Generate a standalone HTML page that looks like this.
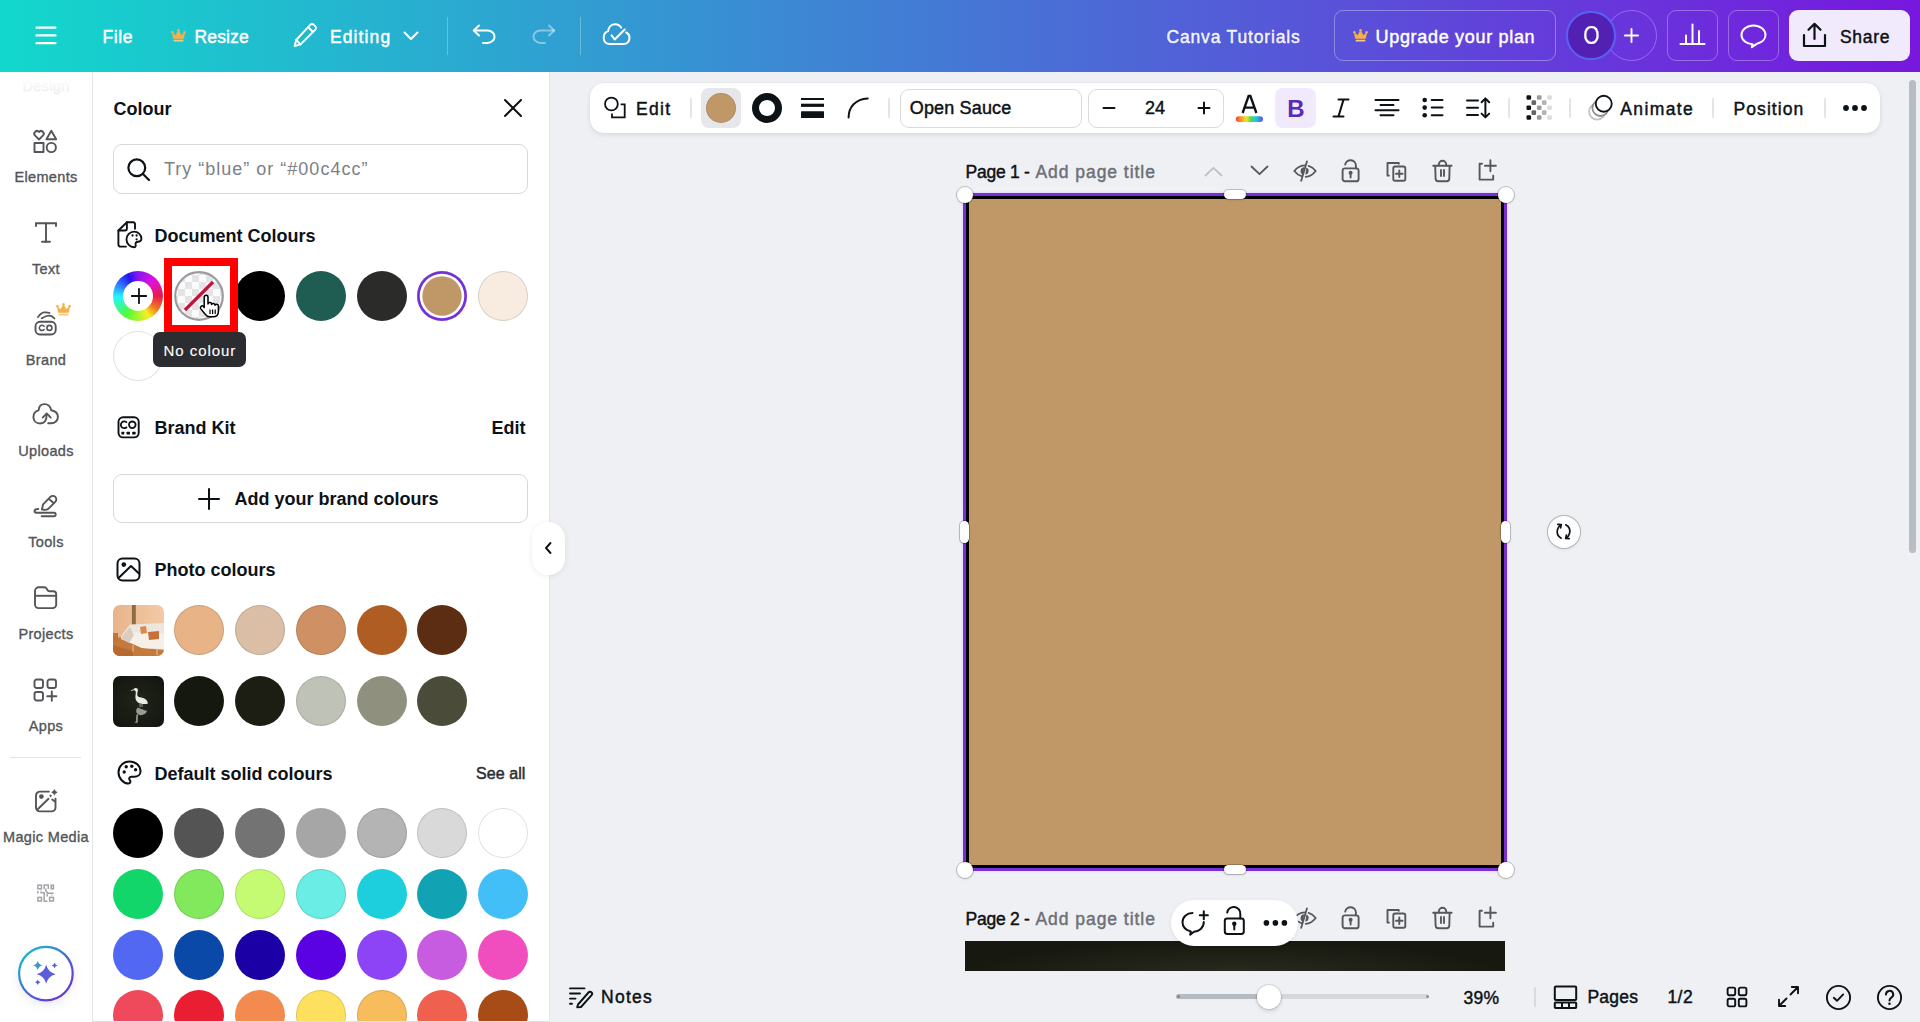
<!DOCTYPE html>
<html><head><meta charset="utf-8">
<style>
*{box-sizing:border-box;margin:0;padding:0}
html,body{width:1920px;height:1022px;overflow:hidden;background:#eff0f4;font-family:"Liberation Sans",sans-serif;color:#0d1216}
.a{position:absolute}
svg{display:block;overflow:visible}
#hdr{left:0;top:0;width:1920px;height:72px;background:linear-gradient(90deg,#12d8cc 0%,#7817de 100%)}
.ht{color:#fff;font-weight:bold;font-size:17.5px;line-height:20px;white-space:nowrap}
#side{left:0;top:72px;width:93px;height:950px;background:#fff;border-right:1px solid #e4e5e9}
.sl{width:92px;text-align:center;color:#535559;font-weight:normal;font-size:14.5px;line-height:16px;white-space:nowrap;letter-spacing:0.35px;-webkit-text-stroke:0.35px #535559}
#panel{left:93px;top:72px;width:456px;height:950px;background:#fff}
.pt{font-weight:bold;font-size:18px;line-height:20px;white-space:nowrap;color:#0d1216}
.sw{width:50px;height:50px;border-radius:50%}
.bd{box-shadow:inset 0 0 0 1px rgba(0,0,0,0.12)}
.tb{color:#0d1216;font-weight:bold;font-size:17.5px;line-height:20px;white-space:nowrap}
.md{font-weight:normal;-webkit-text-stroke-width:0.45px}
</style></head><body>
<div id="hdr" class="a">
<svg class="a" style="left:35px;top:26px" width="22" height="19" viewBox="0 0 22 19"><g stroke="#fff" stroke-width="2.2" stroke-linecap="round"><path d="M1.5 1.6H20.5M1.5 9.4H20.5M1.5 17.2H20.5"/></g></svg>
<div class="a ht md" style="left:102.5px;top:26.5px;letter-spacing:0.6px">File</div>
<svg class="a" style="left:171px;top:29px" width="15" height="13" viewBox="0 0 15 13"><path d="M1.3 3.6 L4.6 6.6 L7.5 1.6 L10.4 6.6 L13.7 3.6 L12.6 9.6 H2.4 Z" fill="#f5b04a" stroke="#f5b04a" stroke-width="0.6" stroke-linejoin="round"/><circle cx="1.4" cy="3.2" r="1.2" fill="#f5b04a"/><circle cx="7.5" cy="1.3" r="1.2" fill="#f5b04a"/><circle cx="13.6" cy="3.2" r="1.2" fill="#f5b04a"/><rect x="2.6" y="10.8" width="9.8" height="1.8" rx="0.5" fill="#f7c88a"/></svg>
<div class="a ht md" style="left:194.5px;top:26.5px;letter-spacing:0.15px">Resize</div>
<svg class="a" style="left:293px;top:23px" width="24" height="24" viewBox="0 0 24 24"><g fill="none" stroke="#fff" stroke-width="1.9" stroke-linejoin="round" stroke-linecap="round"><path d="M17.2 1.8 a2.6 2.6 0 0 1 3.7 0 l1.3 1.3 a2.6 2.6 0 0 1 0 3.7 L7.6 21.4 L1.6 23 L3.2 17 Z"/><path d="M15 4 L20 9"/><path d="M3.2 17 L7.6 21.4"/></g></svg>
<div class="a ht md" style="left:330px;top:26.5px;letter-spacing:1.1px">Editing</div>
<svg class="a" style="left:403px;top:31px" width="16" height="10" viewBox="0 0 16 10"><path d="M1.5 1.5 L8 8 L14.5 1.5" fill="none" stroke="#fff" stroke-width="2" stroke-linecap="round" stroke-linejoin="round"/></svg>
<div class="a" style="left:446.5px;top:17px;width:1px;height:38px;background:rgba(255,255,255,0.28)"></div>
<svg class="a" style="left:472px;top:24px" width="25" height="20" viewBox="0 0 25 20"><g fill="none" stroke="#fff" stroke-width="2" stroke-linecap="round" stroke-linejoin="round"><path d="M7 1.5 L1.8 6.5 L7 11.5"/><path d="M2 6.5 H15.5 a7 6.2 0 0 1 0 12.4 H11"/></g></svg>
<svg class="a" style="left:531px;top:24px" width="25" height="20" viewBox="0 0 25 20" style="opacity:.45"><g fill="none" stroke="rgba(255,255,255,0.42)" stroke-width="2" stroke-linecap="round" stroke-linejoin="round"><path d="M18 1.5 L23.2 6.5 L18 11.5"/><path d="M23 6.5 H9.5 a7 6.2 0 0 0 0 12.4 H14"/></g></svg>
<div class="a" style="left:580px;top:17px;width:1px;height:38px;background:rgba(255,255,255,0.28)"></div>
<svg class="a" style="left:602px;top:23px" width="29" height="23" viewBox="0 0 29 23"><g fill="none" stroke="#fff" stroke-width="2" stroke-linecap="round" stroke-linejoin="round"><path d="M19.2 4.6 C17.9 2.4 15.9 1.2 13.2 1.2 C9.3 1.2 6.5 4 6.1 8.1 C3.6 8.8 1.7 11.5 1.7 14.8 C1.7 18.5 4.3 21.1 7.6 21.1 H21.6 C25 21.1 27.5 18.4 27.5 15 C27.5 12.6 26.4 10.6 24.3 9.5"/><path d="M9.6 12.3 L12.7 16.5 L22.7 6.5"/></g></svg>
<div class="a ht md" style="left:1166.5px;top:26.5px;color:rgba(255,255,255,0.92);letter-spacing:0.83px">Canva Tutorials</div>
<div class="a" style="left:1333.5px;top:10px;width:222px;height:51px;border:1px solid rgba(255,255,255,0.32);border-radius:9px"></div>
<svg class="a" style="left:1353px;top:29px" width="15" height="13" viewBox="0 0 15 13"><path d="M1.3 3.6 L4.6 6.6 L7.5 1.6 L10.4 6.6 L13.7 3.6 L12.6 9.6 H2.4 Z" fill="#f5b04a" stroke="#f5b04a" stroke-width="0.6" stroke-linejoin="round"/><circle cx="1.4" cy="3.2" r="1.2" fill="#f5b04a"/><circle cx="7.5" cy="1.3" r="1.2" fill="#f5b04a"/><circle cx="13.6" cy="3.2" r="1.2" fill="#f5b04a"/><rect x="2.6" y="10.8" width="9.8" height="1.8" rx="0.5" fill="#f7c88a"/></svg>
<div class="a ht md" style="left:1375.5px;top:26.5px;font-size:18px;letter-spacing:0.69px">Upgrade your plan</div>
<div class="a" style="left:1606.3px;top:10.3px;width:50.5px;height:50.5px;border-radius:50%;border:1px solid rgba(190,150,255,0.55)"></div>
<svg class="a" style="left:1624px;top:28px" width="15" height="15" viewBox="0 0 15 15"><path d="M7.5 0.9 V14.1 M0.9 7.5 H14.1" stroke="#fff" stroke-width="1.9" stroke-linecap="round"/></svg>
<div class="a" style="left:1566.3px;top:10.6px;width:49.6px;height:49.6px;border-radius:50%;background:#5220b2;border:2.6px solid #5a5ff2;box-shadow:0 0 2px rgba(90,95,242,0.6)"></div>
<div class="a" style="left:1566.5px;top:22px;width:49px;text-align:center;color:#fff;font-size:25px;line-height:27px;-webkit-text-stroke:0.2px #fff;transform:scaleX(0.84)">O</div>
<div class="a" style="left:1667px;top:10px;width:51px;height:51px;border:1px solid rgba(255,255,255,0.3);border-radius:9px"></div>
<svg class="a" style="left:1679px;top:23px" width="27" height="23" viewBox="0 0 27 23"><g stroke="#fff" stroke-width="2" stroke-linecap="round" fill="none"><path d="M1.5 21 H25.5"/><path d="M7 12.5 V21 M13.5 1.5 V21 M20 8 V21"/></g></svg>
<div class="a" style="left:1728px;top:10px;width:51px;height:51px;border:1px solid rgba(255,255,255,0.3);border-radius:9px"></div>
<svg class="a" style="left:1740px;top:24px" width="27" height="25" viewBox="0 0 27 25"><path d="M13.5 1.5 C6.8 1.5 1.5 5.8 1.5 11 C1.5 16.2 6.8 20.2 12.5 20.2 L11.8 23.2 L16.8 19.8 C21.8 18.6 25.5 15.2 25.5 11 C25.5 5.8 20.2 1.5 13.5 1.5 Z" fill="none" stroke="#fff" stroke-width="2" stroke-linejoin="round"/></svg>
<div class="a" style="left:1789px;top:10px;width:121px;height:51px;background:#f1eafc;border-radius:9px"></div>
<svg class="a" style="left:1802px;top:22px" width="25" height="26" viewBox="0 0 25 26"><g fill="none" stroke="#0d1216" stroke-width="2.2" stroke-linecap="round" stroke-linejoin="round"><path d="M12.5 17 V2 M6.5 7.8 L12.5 1.8 L18.5 7.8"/><path d="M2 13 V24 H23 V13"/></g></svg>
<div class="a ht md" style="left:1840px;top:26.5px;color:#0d1216;letter-spacing:0.69px">Share</div>
</div>
<div id="side" class="a">
<div class="a sl" style="left:0;top:5.8px;color:#ececee;-webkit-text-stroke:0.35px #ececee">Design</div>
<div class="a" style="left:0;top:0;width:92px;height:22px;background:linear-gradient(#fff 30%,rgba(255,255,255,0))"></div>
<svg class="a" style="left:33px;top:57px" width="25" height="25" viewBox="0 0 25 25"><g fill="none" stroke="#535559" stroke-width="1.9" stroke-linejoin="round"><path d="M6 10.5 L1.9 6.4 A2.6 2.6 0 0 1 6 3 A2.6 2.6 0 0 1 10.1 6.4 Z"/><path d="M18.3 1.8 L23.2 10.2 H13.4 Z"/><rect x="1.5" y="14" width="9" height="9"/><circle cx="18.3" cy="18.5" r="4.6"/></g></svg>
<div class="a sl" style="left:0;top:97.15px">Elements</div>
<svg class="a" style="left:35px;top:150px" width="22" height="21" viewBox="0 0 22 21"><g fill="none" stroke="#535559" stroke-width="1.9" stroke-linecap="round"><path d="M1 4 V1.2 H21 V4"/><path d="M11 1.2 V19.8"/><path d="M7 19.8 H15"/></g></svg>
<div class="a sl" style="left:0;top:189.14999999999998px">Text</div>
<svg class="a" style="left:33px;top:238px" width="26" height="27" viewBox="0 0 26 27"><g fill="none" stroke="#535559" stroke-width="1.9" stroke-linecap="round"><rect x="2.5" y="11.8" width="20.2" height="12.7" rx="4.5"/><path d="M4.9 7.1 C7 4.5 8.5 2.6 11 2.4 C13.5 2.2 15.5 2.5 16.6 3.1" stroke-width="1.7"/><path d="M8.6 8.3 C11 7 13.5 5.6 16.1 5.7 C18.5 5.8 20.3 7 21.5 8.5" stroke-width="1.7"/><path d="M11 16.3 A2.6 2.6 0 1 0 11 19.5" stroke-width="1.6"/><circle cx="16.4" cy="17.9" r="2.5" stroke-width="1.6"/></g></svg>
<svg class="a" style="left:56px;top:230.5px" width="15" height="13" viewBox="0 0 15 13"><path d="M1.3 3.6 L4.6 6.6 L7.5 1.6 L10.4 6.6 L13.7 3.6 L12.6 9.6 H2.4 Z" fill="#f5b04a" stroke="#f5b04a" stroke-width="0.6" stroke-linejoin="round"/><circle cx="1.4" cy="3.2" r="1.2" fill="#f5b04a"/><circle cx="7.5" cy="1.3" r="1.2" fill="#f5b04a"/><circle cx="13.6" cy="3.2" r="1.2" fill="#f5b04a"/><rect x="2.6" y="10.8" width="9.8" height="1.8" rx="0.5" fill="#f7c88a"/></svg>
<div class="a sl" style="left:0;top:280.15px">Brand</div>
<svg class="a" style="left:33px;top:331px" width="26" height="23" viewBox="0 0 26 23"><g fill="none" stroke="#535559" stroke-width="1.9" stroke-linecap="round" stroke-linejoin="round"><path d="M15.2 20.3 H18 C22 20.3 24.9 17.5 24.9 14 C24.9 10.5 22.3 7.8 18.2 7.2 C17.4 3.4 15 1.1 11.5 1.1 C8.2 1.1 5.9 3.5 5.6 7.3 C2.4 8.1 0.4 10.8 0.4 14 C0.4 17.8 3.2 20.5 7 20.5 C11 20.5 13.7 17.5 13.7 11.2"/><path d="M9.7 14.6 L13.7 10.4 L17.7 14.6"/></g></svg>
<div class="a sl" style="left:0;top:371.15px">Uploads</div>
<svg class="a" style="left:33px;top:422px" width="26" height="24" viewBox="0 0 26 24"><g fill="none" stroke="#535559" stroke-width="1.9" stroke-linecap="round" stroke-linejoin="round"><path d="M8.9 15.4 L10.1 10.3 L17.4 2.9 A3.4 3.4 0 0 1 22.3 7.8 L15 15.1 C13.2 16.6 11.2 16 8.9 15.4 Z"/><path d="M15.9 5.1 L20.1 8.6"/><path d="M5.3 15 C3.4 15 1.5 15.9 1.5 17.3 C1.5 18.3 2.3 18.7 3.5 18.7 H21 C22.2 18.7 22.7 19.4 22.7 20.4 C22.7 21.5 22 22.2 20.9 22.2 H8.7"/></g></svg>
<div class="a sl" style="left:0;top:462.15px">Tools</div>
<svg class="a" style="left:33px;top:514px" width="25" height="24" viewBox="0 0 25 24"><g fill="none" stroke="#535559" stroke-width="1.9" stroke-linejoin="round"><path d="M2 8 V5 A3.8 3.8 0 0 1 5.8 1.3 H11.2 C12.5 1.3 13.3 1.9 13.9 2.9 L14.5 3.9 C15.1 4.9 15.7 5.3 16.9 5.3 H20.2 A3 3 0 0 1 23.2 8.3 V18.5 A3.6 3.6 0 0 1 19.6 22.1 H5.6 A3.6 3.6 0 0 1 2 18.5 Z"/><path d="M2 9.8 H23.2"/></g></svg>
<div class="a sl" style="left:0;top:554.15px">Projects</div>
<svg class="a" style="left:33px;top:606px" width="25" height="24" viewBox="0 0 25 24"><g fill="none" stroke="#535559" stroke-width="1.9" stroke-linecap="round"><rect x="1.5" y="1.5" width="8.5" height="8.5" rx="2.2"/><rect x="14.5" y="1.5" width="8.5" height="8.5" rx="2.2"/><rect x="1.5" y="14" width="8.5" height="8.5" rx="2.2"/><path d="M18.8 13.5 V22.8 M14.2 18.2 H23.4"/></g></svg>
<div class="a sl" style="left:0;top:645.65px">Apps</div>
<div class="a" style="left:10px;top:685px;width:71px;height:1px;background:#e3e4e8"></div>
<svg class="a" style="left:34px;top:716px" width="26" height="25" viewBox="0 0 26 25"><g fill="none" stroke="#535559" stroke-width="1.9" stroke-linecap="round" stroke-linejoin="round"><path d="M14.9 3.6 H6 A4 4 0 0 0 2 7.6 V19.4 A4 4 0 0 0 6 23.4 H17.5 A4 4 0 0 0 21.5 19.4 V10.6"/><path d="M3.2 21.8 L14.5 10.8"/><path d="M18.3 11.6 L20.8 13.6"/></g><circle cx="7.4" cy="8.6" r="2.3" fill="#535559"/><path d="M20.4 0.9000000000000004 Q21.22 3.38 23.7 4.2 Q21.22 5.03 20.4 7.5 Q19.57 5.03 17.099999999999998 4.2 Q19.57 3.38 20.4 0.9000000000000004 Z" fill="#535559"/><path d="M16.6 6.199999999999999 Q17.08 7.32 18.200000000000003 7.8 Q17.08 8.28 16.6 9.4 Q16.12 8.28 15.000000000000002 7.8 Q16.12 7.32 16.6 6.199999999999999 Z" fill="#535559"/></svg>
<div class="a sl" style="left:0;top:757.15px">Magic Media</div>
<svg class="a" style="left:37px;top:811.5px" width="18" height="18" viewBox="0 0 18 18"><g fill="none" stroke="#a2a4a8" stroke-width="1.5"><rect x="0.9" y="1.2" width="3.6" height="3.6"/><rect x="14.2" y="1.2" width="2.2" height="3.6"/><rect x="0.9" y="13.4" width="3.6" height="3.6"/><rect x="12.6" y="13.4" width="3.8" height="3.6"/><path d="M7.2 5 V0.9 H11.3 V5"/><path d="M0.9 7 V9.5"/><path d="M3.3 8.8 H7.2 V17.2 H10.5"/><path d="M8.8 4.4 V6.8 L11 9.3 H16.6"/><path d="M3.4 7 H4.2"/><path d="M14.8 10.8 V11.5"/><path d="M10.2 9.5 V12.5"/></g></svg>
<svg class="a" style="left:14px;top:870px" width="64" height="64" viewBox="0 0 64 64"><defs><linearGradient id="rg" x1="0.15" y1="0.1" x2="0.85" y2="0.9"><stop offset="0" stop-color="#1ab6c8"/><stop offset="0.55" stop-color="#4a63d6"/><stop offset="1" stop-color="#6a35d8"/></linearGradient></defs><circle cx="31.9" cy="31.6" r="26.8" fill="#fff" stroke="url(#rg)" stroke-width="2.2" style="filter:drop-shadow(0 3px 5px rgba(40,40,80,0.10))"/><path d="M32.2 22.800000000000004 Q34.08 30.32 41.6 32.2 Q34.08 34.08 32.2 41.6 Q30.32 34.08 22.800000000000004 32.2 Q30.32 30.32 32.2 22.800000000000004 Z" fill="#5a5ed8"/><path d="M23.75 18.799999999999997 Q24.58 22.57 28.35 23.4 Q24.58 24.23 23.75 28.0 Q22.92 24.23 19.15 23.4 Q22.92 22.57 23.75 18.799999999999997 Z" fill="#3b96c4"/><path d="M40.6 20.5 Q41.18 22.82 43.5 23.4 Q41.18 23.98 40.6 26.299999999999997 Q40.02 23.98 37.7 23.4 Q40.02 22.82 40.6 20.5 Z" fill="#5a5ed8"/><path d="M23.75 37.5 Q24.31 39.74 26.55 40.3 Q24.31 40.86 23.75 43.099999999999994 Q23.19 40.86 20.95 40.3 Q23.19 39.74 23.75 37.5 Z" fill="#5a5ed8"/></svg>
</div>
<div id="panel" class="a"></div>
<div class="a pt" style="left:113.5px;top:98.56px">Colour</div>
<svg class="a" style="left:504px;top:99px" width="18" height="18" viewBox="0 0 18 18"><path d="M1 1 L17 17 M17 1 L1 17" stroke="#0d1216" stroke-width="2" stroke-linecap="round"/></svg>
<div class="a" style="left:113px;top:144px;width:415px;height:50px;border:1px solid #d6d8dd;border-radius:9px"></div>
<svg class="a" style="left:127px;top:158px" width="24" height="23" viewBox="0 0 24 23"><g fill="none" stroke="#0d1216" stroke-width="2.2" stroke-linecap="round"><circle cx="9.8" cy="9.8" r="8.4"/><path d="M16 16 L22 22"/></g></svg>
<div class="a" style="left:164px;top:158.96px;font-size:18px;line-height:20px;color:#7c8087;white-space:nowrap;letter-spacing:1.0px">Try “blue” or “#00c4cc”</div>
<svg class="a" style="left:117px;top:221px" width="26" height="28" viewBox="0 0 26 28"><g fill="none" stroke="#0d1216" stroke-width="1.9" stroke-linejoin="round" stroke-linecap="round"><path d="M9 25.6 H3.4 A2 2 0 0 1 1.4 23.6 V9.5 L9.9 1.3 H16 A2 2 0 0 1 18 3.3 V7.7"/><path d="M1.4 9.5 H8 A1.9 1.9 0 0 0 9.9 7.6 V1.3"/><path d="M17.3 26.2 C12.8 26 9.5 22.6 9.5 18.4 C9.5 14.1 13 10.6 17 10.6 C21 10.6 24.3 13.6 24.4 17.6 C24.5 20 22.8 20.8 21 20.8 C19.2 20.8 18.3 21.8 18.6 23.3 C18.9 24.6 18.8 26.2 17.3 26.2 Z"/></g><circle cx="15.5" cy="14.5" r="1.15" fill="#0d1216"/><circle cx="19.6" cy="14.5" r="1.15" fill="#0d1216"/><circle cx="19.6" cy="18.3" r="1.15" fill="#0d1216"/></svg>
<div class="a pt" style="left:154.5px;top:226.06px">Document Colours</div>
<div class="a sw" style="left:113px;top:270.5px;background:conic-gradient(#8a14f0 0deg,#de12de 45deg,#e8184a 90deg,#f07a22 125deg,#f6f025 152deg,#55fb35 210deg,#22f6ff 268deg,#2f6cff 305deg,#2414f0 335deg,#8a14f0 360deg)"></div>
<div class="a" style="left:123px;top:280.5px;width:30px;height:30px;border-radius:50%;background:#fff"></div>
<svg class="a" style="left:130.5px;top:288px" width="16" height="16" viewBox="0 0 16 16"><path d="M8 0.8 V15.2 M0.8 8 H15.2" stroke="#0d1216" stroke-width="1.8" stroke-linecap="round"/></svg>
<svg class="a" style="left:174px;top:270.5px" width="50" height="50" viewBox="0 0 50 50"><defs><pattern id="chk" x="4" y="4" width="14" height="14" patternUnits="userSpaceOnUse"><rect width="14" height="14" fill="#fbfbfb"/><rect width="7" height="7" fill="#e3e4e6"/><rect x="7" y="7" width="7" height="7" fill="#e3e4e6"/></pattern><clipPath id="cc"><circle cx="25" cy="25" r="23"/></clipPath></defs><circle cx="25" cy="25" r="23" fill="url(#chk)"/><circle cx="25" cy="25" r="23.8" fill="none" stroke="#9a9b9e" stroke-width="2.2"/><path d="M11 39 L39 11" stroke="#c1123a" stroke-width="3.2" clip-path="url(#cc)"/></svg>
<div class="a sw" style="left:235px;top:270.5px;background:#000;"></div>
<div class="a sw" style="left:295.5px;top:270.5px;background:#1f5c52;"></div>
<div class="a sw" style="left:356.5px;top:270.5px;background:#2b2c2a;"></div>
<div class="a sw" style="left:417px;top:270.5px;background:#c09868;box-shadow:inset 0 0 0 2.7px #7431d9,inset 0 0 0 5.3px #fff"></div>
<div class="a sw bd" style="left:478px;top:270.5px;background:#f7ecdf;"></div>
<div class="a sw bd" style="left:113px;top:331px;background:#fff;"></div>
<div class="a" style="left:163.5px;top:258px;width:74.6px;height:74.6px;border:8.2px solid #ff0000"></div>
<svg class="a" style="left:199px;top:294px" width="22" height="24" viewBox="0 0 22 24"><path d="M5.2 13.5 V3.2 A1.9 1.9 0 0 1 9 3.2 V10 A1.8 1.8 0 0 1 12.6 10.5 A1.8 1.8 0 0 1 16 11.2 A1.8 1.8 0 0 1 19.4 12.2 V17.5 C19.4 20.5 17.5 22.8 14 22.8 H10.5 C8.3 22.8 7.2 21.6 6 20 L1.6 14.6 A1.9 1.9 0 0 1 4.5 12.3 Z" fill="#fff" stroke="#000" stroke-width="1.5" stroke-linejoin="round"/><path d="M11 15.5 V20 M13.6 15.5 V20 M16.2 15.5 V20" stroke="#000" stroke-width="1.2"/></svg>
<div class="a" style="left:152.5px;top:331.5px;width:93px;height:35px;background:#2c2d31;border-radius:7px"></div>
<div class="a" style="left:163.5px;top:341.5px;font-size:15px;line-height:17px;color:#fff;white-space:nowrap;letter-spacing:0.95px;-webkit-text-stroke:0.12px #fff">No colour</div>
<svg class="a" style="left:116px;top:415px" width="25" height="25" viewBox="0 0 25 25"><g fill="none" stroke="#0d1216" stroke-width="1.9"><rect x="2.5" y="2.2" width="20.2" height="20.2" rx="4.6"/><path d="M10.9 7.7 A3.4 3.4 0 1 0 10.9 11.9" stroke-width="1.8"/><circle cx="16.3" cy="9.8" r="3.3" stroke-width="1.8"/></g><g fill="#0d1216"><rect x="5.4" y="16.8" width="2.8" height="2.8" rx="0.4"/><rect x="10.6" y="16.8" width="3.4" height="2.8" rx="0.4"/><rect x="16.2" y="16.8" width="3.4" height="2.8" rx="0.4"/></g></svg>
<div class="a pt" style="left:154.5px;top:417.76px">Brand Kit</div>
<div class="a pt" style="left:491.5px;top:417.76px;width:34px;text-align:right">Edit</div>
<div class="a" style="left:113px;top:474px;width:415px;height:49px;border:1px solid #d6d8dd;border-radius:9px"></div>
<svg class="a" style="left:198px;top:488px" width="22" height="22" viewBox="0 0 22 22"><path d="M11 1 V21 M1 11 H21" stroke="#0d1216" stroke-width="2" stroke-linecap="round"/></svg>
<div class="a pt" style="left:234.5px;top:488.86px">Add your brand colours</div>
<svg class="a" style="left:116px;top:557px" width="25" height="25" viewBox="0 0 25 25"><g fill="none" stroke="#0d1216" stroke-width="2" stroke-linejoin="round"><rect x="1.5" y="1.5" width="22" height="22" rx="5"/><path d="M2 21.5 L15 9 L23.5 17"/></g><circle cx="7.8" cy="7.6" r="2.3" fill="#0d1216"/></svg>
<div class="a pt" style="left:154.5px;top:559.96px">Photo colours</div>
<svg class="a" style="left:113px;top:605px" width="51" height="51" viewBox="0 0 51 51"><defs><clipPath id="th1"><rect width="51" height="51" rx="7"/></clipPath><linearGradient id="wl" x1="0" y1="0" x2="1" y2="0"><stop offset="0" stop-color="#e8b48a"/><stop offset="1" stop-color="#f3caa6"/></linearGradient></defs><g clip-path="url(#th1)"><rect width="51" height="51" fill="url(#wl)"/><rect x="18.9" y="0" width="3.9" height="20" fill="#8f6b45"/><path d="M0 33 L9 32 L30 43 L51 45 V51 H0 Z" fill="#c47a3c"/><path d="M0 40 L20 46 V51 H0 Z" fill="#b86a2e"/><rect x="0" y="28" width="5" height="9" fill="#c0763a"/><path d="M8 31 L17 19.5 L51 18 V44 L29 43 L8 34 Z" fill="#eee5dc"/><path d="M17 27 L51 29 V44 L29 43 L10 34 Z" fill="#f6f0e9"/><path d="M9 31 L17 22 L21 30 L16 38 L9 34 Z" fill="#d9cdc1"/><path d="M27 22 L33 21 L34 28 L28 29 Z" fill="#d98b4b"/><path d="M35 27 L46 26 L46 34 L36 35 Z" fill="#c8703a"/><path d="M20 40 V47 M44 44 V50" stroke="#e6d8c8" stroke-width="0.8"/></g></svg>
<svg class="a" style="left:113px;top:676px" width="51" height="51" viewBox="0 0 51 51"><defs><clipPath id="th2"><rect width="51" height="51" rx="7"/></clipPath><radialGradient id="dk" cx="0.5" cy="0.5" r="0.65"><stop offset="0" stop-color="#22251a"/><stop offset="1" stop-color="#131510"/></radialGradient></defs><g clip-path="url(#th2)"><rect width="51" height="51" fill="url(#dk)"/><path d="M20.5 14.2 C20.2 12 23.2 11.2 24.6 12.8 C25.6 14.2 24.2 16.4 24.2 18.4 C24.2 20.4 26 21.2 28.5 21.6 C32 22.2 34.5 24.5 35 27.5 C31.5 28.5 27.5 28 25 26.5 C22.6 25 22 22 22.6 18.8 C22.9 16.8 23 15.2 22 14.6 Z" fill="#e9ebe2"/><path d="M20.6 13.8 L18.2 14.6" stroke="#d6d8cf" stroke-width="1"/><path d="M27 27.5 V31 M29 27.8 V31" stroke="#b9bbb2" stroke-width="0.8"/><path d="M25 31.5 C22.5 33.5 22.6 37 25.5 38.6 C29 40.2 33 38 34.2 35 C30.8 33.8 27.5 33 25 31.5 Z" fill="#aeb0a6" opacity="0.85"/><path d="M24.6 38.5 C23 41 24.5 43.5 23.8 46.5" stroke="#a2a49a" stroke-width="1.6" fill="none"/><path d="M23.8 46.5 L21.8 46" stroke="#9a9c92" stroke-width="1"/></g></svg>
<div class="a sw bd" style="left:174px;top:605px;background:#e7b387"></div>
<div class="a sw bd" style="left:235px;top:605px;background:#dbbea6"></div>
<div class="a sw bd" style="left:295.5px;top:605px;background:#cf9163"></div>
<div class="a sw" style="left:356.5px;top:605px;background:#af5d23"></div>
<div class="a sw" style="left:417px;top:605px;background:#5c2d12"></div>
<div class="a sw" style="left:174px;top:676px;background:#15180e"></div>
<div class="a sw" style="left:235px;top:676px;background:#1c1e13"></div>
<div class="a sw bd" style="left:295.5px;top:676px;background:#bfc3b7"></div>
<div class="a sw" style="left:356.5px;top:676px;background:#8f907e"></div>
<div class="a sw" style="left:417px;top:676px;background:#4a4b38"></div>
<svg class="a" style="left:117px;top:760px" width="25" height="25" viewBox="0 0 25 25"><path d="M12.5 1.5 C6.4 1.5 1.5 6.2 1.5 12.2 C1.5 18.5 6.5 23.5 11.5 23.5 C13.6 23.5 13.8 21.5 12.8 20.2 C11.6 18.8 12.4 16.8 14.3 16.8 H17.2 C20.8 16.8 23.5 14.6 23.5 11.4 C23.5 5.8 18.6 1.5 12.5 1.5 Z" fill="none" stroke="#0d1216" stroke-width="2" stroke-linejoin="round"/><circle cx="7.2" cy="12" r="1.7" fill="#0d1216"/><circle cx="9.2" cy="6.8" r="1.7" fill="#0d1216"/><circle cx="14.8" cy="6.2" r="1.7" fill="#0d1216"/><circle cx="18.6" cy="9.8" r="1.7" fill="#0d1216"/></svg>
<div class="a pt" style="left:154.5px;top:763.76px">Default solid colours</div>
<div class="a" style="left:460px;top:765.45px;width:65.5px;text-align:right;font-weight:normal;-webkit-text-stroke:0.5px #2b2f35;letter-spacing:0.1px;font-size:16px;line-height:18px;color:#2b2f35;white-space:nowrap">See all</div>
<div class="a sw" style="left:113px;top:808px;background:#000000"></div>
<div class="a sw" style="left:174px;top:808px;background:#545454"></div>
<div class="a sw" style="left:235px;top:808px;background:#737373"></div>
<div class="a sw" style="left:295.5px;top:808px;background:#a6a6a6"></div>
<div class="a sw bd" style="left:356.5px;top:808px;background:#b4b4b4"></div>
<div class="a sw bd" style="left:417px;top:808px;background:#d9d9d9"></div>
<div class="a sw bd" style="left:478px;top:808px;background:#ffffff"></div>
<div class="a sw" style="left:113px;top:869px;background:#12d66a"></div>
<div class="a sw bd" style="left:174px;top:869px;background:#82e85c"></div>
<div class="a sw bd" style="left:235px;top:869px;background:#c5fb72"></div>
<div class="a sw bd" style="left:295.5px;top:869px;background:#6aede5"></div>
<div class="a sw" style="left:356.5px;top:869px;background:#1dcfdc"></div>
<div class="a sw" style="left:417px;top:869px;background:#11a3b3"></div>
<div class="a sw" style="left:478px;top:869px;background:#43bff8"></div>
<div class="a sw" style="left:113px;top:929.6px;background:#5268f2"></div>
<div class="a sw" style="left:174px;top:929.6px;background:#0b49a8"></div>
<div class="a sw" style="left:235px;top:929.6px;background:#1b00a6"></div>
<div class="a sw" style="left:295.5px;top:929.6px;background:#5b02e3"></div>
<div class="a sw" style="left:356.5px;top:929.6px;background:#8d43f6"></div>
<div class="a sw" style="left:417px;top:929.6px;background:#c75ce1"></div>
<div class="a sw" style="left:478px;top:929.6px;background:#f04dbf"></div>
<div class="a sw" style="left:113px;top:990.3px;background:#ee4a5b"></div>
<div class="a sw" style="left:174px;top:990.3px;background:#e91e32"></div>
<div class="a sw" style="left:235px;top:990.3px;background:#f38a4f"></div>
<div class="a sw bd" style="left:295.5px;top:990.3px;background:#fde15e"></div>
<div class="a sw bd" style="left:356.5px;top:990.3px;background:#f7bc5b"></div>
<div class="a sw" style="left:417px;top:990.3px;background:#f0604f"></div>
<div class="a sw" style="left:478px;top:990.3px;background:#a74b17"></div>
<div class="a" style="left:92px;top:1021px;width:457px;height:1px;background:#dfe0e4"></div>
<div class="a" style="left:590px;top:83px;width:1290px;height:50px;background:#fff;border-radius:14px;box-shadow:0 2px 5px rgba(30,40,60,0.10),0 0 1px rgba(30,40,60,0.12)"></div>
<svg class="a" style="left:603px;top:95px" width="24" height="24" viewBox="0 0 24 24"><g fill="none" stroke="#0d1216" stroke-width="1.8"><circle cx="8.4" cy="9" r="6.4"/><path d="M9 19.3 V22.3 H21.7 V9.4 H18.6" stroke-linecap="square"/></g></svg>
<div class="a tb md" style="left:636px;top:98.94px;letter-spacing:1.28px">Edit</div>
<div class="a" style="left:690px;top:98px;width:2px;height:20px;background:#e3e4e7;border-radius:1px"></div>
<div class="a" style="left:888.3px;top:98px;width:2px;height:20px;background:#e3e4e7;border-radius:1px"></div>
<div class="a" style="left:1507.8px;top:98px;width:2px;height:20px;background:#e3e4e7;border-radius:1px"></div>
<div class="a" style="left:1569px;top:98px;width:2px;height:20px;background:#e3e4e7;border-radius:1px"></div>
<div class="a" style="left:1712.3px;top:98px;width:2px;height:20px;background:#e3e4e7;border-radius:1px"></div>
<div class="a" style="left:1823.7px;top:98px;width:2px;height:20px;background:#e3e4e7;border-radius:1px"></div>
<div class="a" style="left:701px;top:88px;width:40px;height:40px;background:#e6e7eb;border-radius:8px"></div>
<div class="a" style="left:706.3px;top:93px;width:30px;height:30px;border-radius:50%;background:#c09868;box-shadow:inset 0 0 0 1px rgba(0,0,0,0.08)"></div>
<div class="a" style="left:752px;top:93px;width:30px;height:30px;border-radius:50%;border:7.6px solid #0d1216"></div>
<svg class="a" style="left:800px;top:96px" width="25" height="24" viewBox="0 0 25 24"><g fill="#0d1216"><rect x="1" y="2" width="23" height="2"/><rect x="1" y="7.7" width="23" height="3.2"/><rect x="1" y="15.3" width="23" height="6.7" rx="0.5"/></g></svg>
<svg class="a" style="left:846px;top:96px" width="24" height="24" viewBox="0 0 24 24"><path d="M2.6 21.5 C2.6 11 9.5 3 21.8 2.4" fill="none" stroke="#0d1216" stroke-width="2" stroke-linecap="round"/></svg>
<div class="a" style="left:899.5px;top:88.5px;width:182px;height:39px;border:1px solid #d9dbdf;border-radius:9px"></div>
<div class="a" style="left:909.8px;top:98.36px;font-size:18px;line-height:20px;white-space:nowrap;color:#0d1216;letter-spacing:0.15px;-webkit-text-stroke:0.45px #0d1216">Open Sauce</div>
<div class="a" style="left:1087.5px;top:88.5px;width:136px;height:39px;border:1px solid #d9dbdf;border-radius:9px"></div>
<svg class="a" style="left:1101.5px;top:101px" width="14" height="14" viewBox="0 0 14 14"><path d="M1.5 7 H12.5" stroke="#0d1216" stroke-width="2" stroke-linecap="round"/></svg>
<div class="a" style="left:1135px;top:98.36px;width:40px;text-align:center;font-size:18px;line-height:20px;color:#0d1216;-webkit-text-stroke:0.45px #0d1216">24</div>
<svg class="a" style="left:1196.5px;top:101px" width="14" height="14" viewBox="0 0 14 14"><path d="M7 1.5 V12.5 M1.5 7 H12.5" stroke="#0d1216" stroke-width="2" stroke-linecap="round"/></svg>
<svg class="a" style="left:1234px;top:94px" width="31" height="30" viewBox="0 0 31 30"><defs><linearGradient id="rb" x1="0" x2="1"><stop offset="0" stop-color="#ff3b3b"/><stop offset="0.2" stop-color="#ff9a1f"/><stop offset="0.4" stop-color="#e8e82a"/><stop offset="0.55" stop-color="#4fdc4a"/><stop offset="0.75" stop-color="#22c6e6"/><stop offset="1" stop-color="#5a4df0"/></linearGradient></defs><path d="M8.6 19 L14.6 2 H16.4 L22.4 19 M10.6 13.6 H20.4" fill="none" stroke="#0d1216" stroke-width="2.3" stroke-linejoin="miter"/><rect x="1.8" y="22.2" width="27.2" height="5.8" rx="2.9" fill="url(#rb)"/></svg>
<div class="a" style="left:1275px;top:88px;width:40.5px;height:40px;background:#f1eafd;border-radius:8px"></div>
<div class="a" style="left:1286px;top:95.5px;width:20px;text-align:center;font-weight:bold;font-size:24px;line-height:26px;color:#5a2cb5">B</div>
<svg class="a" style="left:1331px;top:98px" width="20" height="20" viewBox="0 0 20 20"><g stroke="#0d1216" stroke-width="2" stroke-linecap="round" fill="none"><path d="M7.5 1.6 H17.5 M2.5 18.4 H12.5 M12.5 1.6 L7.5 18.4"/></g></svg>
<svg class="a" style="left:1374px;top:98px" width="26" height="20" viewBox="0 0 26 20"><g stroke="#0d1216" stroke-width="2" stroke-linecap="round"><path d="M1.5 2 H24.5 M6.5 7 H19.5 M1.5 12.3 H24.5 M6.5 17.3 H19.5"/></g></svg>
<svg class="a" style="left:1421px;top:97px" width="24" height="22" viewBox="0 0 24 22"><g fill="#0d1216"><circle cx="3.7" cy="3" r="2.3"/><circle cx="3.7" cy="10.6" r="2.3"/><circle cx="3.7" cy="18.3" r="2.3"/></g><g stroke="#0d1216" stroke-width="2" stroke-linecap="round"><path d="M10.7 3 H21.5 M10.7 10.6 H21.5 M10.7 18.3 H21.5"/></g></svg>
<svg class="a" style="left:1465px;top:97px" width="27" height="22" viewBox="0 0 27 22"><g stroke="#0d1216" stroke-width="2" stroke-linecap="round" stroke-linejoin="round" fill="none"><path d="M2 3.4 H13 M2 10.7 H13 M2 18 H13"/><path d="M20.4 1.6 V20.2 M16.6 5.2 L20.4 1.4 L24.2 5.2 M16.6 16.6 L20.4 20.4 L24.2 16.6"/></g></svg>
<svg class="a" style="left:1524px;top:93px" width="30" height="30" viewBox="0 0 30 30"><rect x="2.50" y="2.20" width="4.6" height="4.6" rx="1.2" fill="#111"/><rect x="2.50" y="12.40" width="4.6" height="4.6" rx="1.2" fill="#111"/><rect x="2.50" y="22.20" width="4.6" height="4.6" rx="1.2" fill="#111"/><rect x="7.50" y="7.30" width="4.6" height="4.6" rx="1.2" fill="#666"/><rect x="7.50" y="17.30" width="4.6" height="4.6" rx="1.2" fill="#666"/><rect x="12.90" y="2.20" width="4.6" height="4.6" rx="1.2" fill="#9a9a9a"/><rect x="12.90" y="12.40" width="4.6" height="4.6" rx="1.2" fill="#9a9a9a"/><rect x="12.90" y="22.20" width="4.6" height="4.6" rx="1.2" fill="#9a9a9a"/><rect x="17.90" y="7.30" width="4.6" height="4.6" rx="1.2" fill="#b4b4b4"/><rect x="17.90" y="17.30" width="4.6" height="4.6" rx="1.2" fill="#b4b4b4"/><rect x="23.30" y="2.20" width="4.6" height="4.6" rx="1.2" fill="#dcdcdc"/><rect x="23.30" y="12.40" width="4.6" height="4.6" rx="1.2" fill="#dcdcdc"/><rect x="23.30" y="22.20" width="4.6" height="4.6" rx="1.2" fill="#dcdcdc"/></svg>
<svg class="a" style="left:1585px;top:93px" width="30" height="30" viewBox="0 0 30 30"><g fill="none" stroke-width="1.8"><circle cx="12.1" cy="18.6" r="8" stroke="#c4c4c4"/><circle cx="15.4" cy="15" r="8" stroke="#8d8d8d" fill="#fff"/><circle cx="18.75" cy="10.75" r="8" stroke="#0d1216" fill="#fff"/></g></svg>
<div class="a tb md" style="left:1620.3px;top:98.94px;letter-spacing:1.37px">Animate</div>
<div class="a tb md" style="left:1733.5px;top:98.94px;letter-spacing:1.08px">Position</div>
<svg class="a" style="left:1842px;top:104px" width="26" height="8" viewBox="0 0 26 8"><g fill="#0d1216"><circle cx="4" cy="4" r="2.9"/><circle cx="13" cy="4" r="2.9"/><circle cx="22" cy="4" r="2.9"/></g></svg>
<div class="a tb md" style="left:965.5px;top:161.94px;letter-spacing:-0.25px">Page 1 -</div><div class="a tb md" style="left:1035.5px;top:161.94px;color:#6c7077;letter-spacing:0.95px">Add page title</div>
<svg class="a" style="left:1204px;top:166px" width="19" height="11" viewBox="0 0 19 11"><path d="M1.5 9.5 L9.5 1.8 L17.5 9.5" fill="none" stroke="#bfc1c5" stroke-width="1.8" stroke-linecap="round" stroke-linejoin="round"/></svg>
<svg class="a" style="left:1250px;top:165px" width="19" height="11" viewBox="0 0 19 11"><path d="M1.5 1.5 L9.5 9.2 L17.5 1.5" fill="none" stroke="#54575c" stroke-width="1.8" stroke-linecap="round" stroke-linejoin="round"/></svg>
<svg class="a" style="left:1293px;top:160px" width="24" height="22" viewBox="0 0 24 22"><g fill="none" stroke="#54575c" stroke-width="1.8" stroke-linecap="round"><path d="M8.6 16.2 C5.5 15.3 3 13.2 1.3 11 C4 7.5 7.6 5.5 11.3 5.3"/><path d="M15.6 5.8 C18.5 6.7 21 8.6 22.7 11 C20 14.5 16.4 16.6 12.7 16.8"/><path d="M14 1.3 L8.2 20.8"/></g><path d="M11.3 7.3 A3.8 3.8 0 0 0 9.9 14.6 Z" fill="#54575c"/><path d="M13.4 7.6 A3.7 3.7 0 0 1 12.3 14.7 Z" fill="#54575c"/></svg>
<svg class="a" style="left:1341px;top:158px" width="19" height="25" viewBox="0 0 19 25"><g fill="none" stroke="#54575c" stroke-width="1.9" stroke-linecap="round"><path d="M4.2 6.6 A5.4 5.4 0 0 1 14.9 7.5 V10.4"/><rect x="1.6" y="10.4" width="16" height="12.9" rx="2.4"/><path d="M9.6 15.2 V19.6"/></g><circle cx="9.6" cy="14.8" r="2" fill="#54575c"/></svg>
<svg class="a" style="left:1386px;top:161px" width="21" height="21" viewBox="0 0 21 21"><g fill="none" stroke="#54575c" stroke-width="1.9" stroke-linecap="round" stroke-linejoin="round"><path d="M12.8 2.8 V2 H1.5 V14.6 H3"/><rect x="7.3" y="5.5" width="12" height="14.3" rx="1.8"/><path d="M13.3 9.4 V16 M10 12.7 H16.6"/></g></svg>
<svg class="a" style="left:1431.5px;top:160px" width="21" height="23" viewBox="0 0 21 23"><g fill="none" stroke="#54575c" stroke-width="1.9" stroke-linecap="round" stroke-linejoin="round"><path d="M1.2 5.8 H19.6"/><path d="M6.8 5.6 V4.5 A2.8 2.8 0 0 1 14.2 4.5 V5.6"/><path d="M3.2 6 L3.6 18.5 A2.7 2.7 0 0 0 6.3 21.2 H14.6 A2.7 2.7 0 0 0 17.3 18.5 L17.6 6"/><path d="M9 10 V16 M12 10 V16"/></g></svg>
<svg class="a" style="left:1478px;top:159px" width="21" height="22" viewBox="0 0 21 22"><g fill="none" stroke="#54575c" stroke-width="1.9" stroke-linecap="round" stroke-linejoin="round"><path d="M4 4.7 H1.6 V20.6 H15.2 V16.6"/><path d="M12.4 1.3 V12.3 M6.9 6.8 H17.9"/></g></svg>
<div class="a" style="left:963px;top:193px;width:544px;height:678px;border:3px solid #7631d3;box-shadow:0 0 0 1.5px rgba(236,222,255,0.9)"></div>
<div class="a" style="left:966px;top:196px;width:538px;height:672px;border:3px solid #000;background:#c09868"></div>
<div class="a" style="left:956.5px;top:186.5px;width:16px;height:16px;border-radius:50%;background:#fff;box-shadow:0 0 0 1px rgba(0,0,0,0.2),0 1px 3px rgba(0,0,0,0.12)"></div>
<div class="a" style="left:1497.5px;top:186.5px;width:16px;height:16px;border-radius:50%;background:#fff;box-shadow:0 0 0 1px rgba(0,0,0,0.2),0 1px 3px rgba(0,0,0,0.12)"></div>
<div class="a" style="left:956.5px;top:861.5px;width:16px;height:16px;border-radius:50%;background:#fff;box-shadow:0 0 0 1px rgba(0,0,0,0.2),0 1px 3px rgba(0,0,0,0.12)"></div>
<div class="a" style="left:1497.5px;top:861.5px;width:16px;height:16px;border-radius:50%;background:#fff;box-shadow:0 0 0 1px rgba(0,0,0,0.2),0 1px 3px rgba(0,0,0,0.12)"></div>
<div class="a" style="left:1224px;top:190px;width:22px;height:9px;border-radius:5px;background:#fff;box-shadow:0 0 0 1px rgba(0,0,0,0.2),0 1px 3px rgba(0,0,0,0.12)"></div>
<div class="a" style="left:1224px;top:865px;width:22px;height:9px;border-radius:5px;background:#fff;box-shadow:0 0 0 1px rgba(0,0,0,0.2),0 1px 3px rgba(0,0,0,0.12)"></div>
<div class="a" style="left:960px;top:521px;width:9px;height:22px;border-radius:5px;background:#fff;box-shadow:0 0 0 1px rgba(0,0,0,0.2),0 1px 3px rgba(0,0,0,0.12)"></div>
<div class="a" style="left:1501px;top:521px;width:9px;height:22px;border-radius:5px;background:#fff;box-shadow:0 0 0 1px rgba(0,0,0,0.2),0 1px 3px rgba(0,0,0,0.12)"></div>
<div class="a" style="left:1547.5px;top:515.5px;width:32px;height:32px;border-radius:50%;background:#fff;box-shadow:0 0 0 1px rgba(0,0,0,0.22),0 1px 4px rgba(0,0,0,0.1)"></div>
<svg class="a" style="left:1554px;top:522px" width="19" height="19" viewBox="0 0 19 19"><g fill="none" stroke="#0d1216" stroke-width="1.7" stroke-linecap="round" stroke-linejoin="round"><path d="M7.2 16.2 C4 14.5 2.6 11 3.5 7.5 C4 5.5 5.6 3.6 7 2.8"/><path d="M3.8 2.3 L7.3 2.5 L6.6 5.8"/><path d="M11.8 2.8 C15 4.5 16.4 8 15.5 11.5 C15 13.5 13.4 15.4 12 16.2"/><path d="M15.2 16.7 L11.7 16.5 L12.4 13.2"/></g></svg>
<div class="a tb md" style="left:965.5px;top:908.94px;letter-spacing:-0.25px">Page 2 -</div><div class="a tb md" style="left:1035.5px;top:908.94px;color:#6c7077;letter-spacing:0.95px">Add page title</div>
<svg class="a" style="left:1204px;top:913px" width="19" height="11" viewBox="0 0 19 11"><path d="M1.5 9.5 L9.5 1.8 L17.5 9.5" fill="none" stroke="#bfc1c5" stroke-width="1.8" stroke-linecap="round" stroke-linejoin="round"/></svg>
<svg class="a" style="left:1250px;top:912px" width="19" height="11" viewBox="0 0 19 11"><path d="M1.5 1.5 L9.5 9.2 L17.5 1.5" fill="none" stroke="#54575c" stroke-width="1.8" stroke-linecap="round" stroke-linejoin="round"/></svg>
<svg class="a" style="left:1293px;top:907px" width="24" height="22" viewBox="0 0 24 22"><g fill="none" stroke="#54575c" stroke-width="1.8" stroke-linecap="round"><path d="M8.6 16.2 C5.5 15.3 3 13.2 1.3 11 C4 7.5 7.6 5.5 11.3 5.3"/><path d="M15.6 5.8 C18.5 6.7 21 8.6 22.7 11 C20 14.5 16.4 16.6 12.7 16.8"/><path d="M14 1.3 L8.2 20.8"/></g><path d="M11.3 7.3 A3.8 3.8 0 0 0 9.9 14.6 Z" fill="#54575c"/><path d="M13.4 7.6 A3.7 3.7 0 0 1 12.3 14.7 Z" fill="#54575c"/></svg>
<svg class="a" style="left:1341px;top:905px" width="19" height="25" viewBox="0 0 19 25"><g fill="none" stroke="#54575c" stroke-width="1.9" stroke-linecap="round"><path d="M4.2 6.6 A5.4 5.4 0 0 1 14.9 7.5 V10.4"/><rect x="1.6" y="10.4" width="16" height="12.9" rx="2.4"/><path d="M9.6 15.2 V19.6"/></g><circle cx="9.6" cy="14.8" r="2" fill="#54575c"/></svg>
<svg class="a" style="left:1386px;top:908px" width="21" height="21" viewBox="0 0 21 21"><g fill="none" stroke="#54575c" stroke-width="1.9" stroke-linecap="round" stroke-linejoin="round"><path d="M12.8 2.8 V2 H1.5 V14.6 H3"/><rect x="7.3" y="5.5" width="12" height="14.3" rx="1.8"/><path d="M13.3 9.4 V16 M10 12.7 H16.6"/></g></svg>
<svg class="a" style="left:1431.5px;top:907px" width="21" height="23" viewBox="0 0 21 23"><g fill="none" stroke="#54575c" stroke-width="1.9" stroke-linecap="round" stroke-linejoin="round"><path d="M1.2 5.8 H19.6"/><path d="M6.8 5.6 V4.5 A2.8 2.8 0 0 1 14.2 4.5 V5.6"/><path d="M3.2 6 L3.6 18.5 A2.7 2.7 0 0 0 6.3 21.2 H14.6 A2.7 2.7 0 0 0 17.3 18.5 L17.6 6"/><path d="M9 10 V16 M12 10 V16"/></g></svg>
<svg class="a" style="left:1478px;top:906px" width="21" height="22" viewBox="0 0 21 22"><g fill="none" stroke="#54575c" stroke-width="1.9" stroke-linecap="round" stroke-linejoin="round"><path d="M4 4.7 H1.6 V20.6 H15.2 V16.6"/><path d="M12.4 1.3 V12.3 M6.9 6.8 H17.9"/></g></svg>
<div class="a" style="left:964.5px;top:941px;width:540.5px;height:40px;background:radial-gradient(ellipse at 50% 80%,#2a2b1f,#17180f 70%)"></div>
<div class="a" style="left:1171px;top:900px;width:127px;height:46px;border-radius:23px;background:#fff;box-shadow:0 1px 4px rgba(0,0,0,0.08)"></div>
<svg class="a" style="left:1180px;top:909px" width="30" height="28" viewBox="0 0 30 28"><g fill="none" stroke="#0d1216" stroke-width="2" stroke-linecap="round" stroke-linejoin="round"><path d="M23.8 13 C23.8 19 19 22.3 14 22.8 L10.2 25.6 L10.8 22.4 C5.8 21 2.5 17.5 2.5 13.2 C2.5 8 6.7 4 12.5 4"/><path d="M23.8 2.2 V10.3 M19.8 6.2 H27.9"/></g></svg>
<svg class="a" style="left:1223px;top:907px" width="23" height="29" viewBox="0 0 23 29"><g fill="none" stroke="#0d1216" stroke-width="2" stroke-linecap="round"><path d="M4.2 5.6 A6.6 6.6 0 0 1 17.3 7.2 V11.5"/><rect x="1.8" y="11.5" width="19" height="15.5" rx="2.4"/><path d="M11.3 17.5 V22.5"/></g><circle cx="11.3" cy="16.8" r="2.2" fill="#0d1216"/></svg>
<svg class="a" style="left:1262px;top:919px" width="27" height="8" viewBox="0 0 27 8"><g fill="#0d1216"><circle cx="4.4" cy="3.9" r="2.8"/><circle cx="13.4" cy="3.9" r="2.8"/><circle cx="22.4" cy="3.9" r="2.8"/></g></svg>
<div class="a" style="left:549px;top:971px;width:1371px;height:51px;background:#eff0f4"></div>
<div class="a" style="left:549px;top:72px;width:1px;height:950px;background:#e4e5e9"></div>
<svg class="a" style="left:569px;top:987px" width="25" height="21" viewBox="0 0 25 21"><g fill="none" stroke="#0d1216" stroke-width="1.9" stroke-linecap="round" stroke-linejoin="round"><path d="M1 1.4 H15.5 M1 6.5 H11 M1 11.6 H6.5 M1 16.8 H3"/><path d="M9 17.5 L19.5 5.5 A2 2 0 0 1 22.6 8.2 L12 20 L8.2 20.3 Z"/></g></svg>
<div class="a tb md" style="left:601px;top:987.14px;letter-spacing:1.26px">Notes</div>
<div class="a" style="left:1176px;top:994px;width:253px;height:5px;border-radius:3px;background:#d6d8de"></div>
<div class="a" style="left:1176px;top:994px;width:93px;height:5px;border-radius:3px;background:#b6bac3"></div>
<div class="a" style="left:1176.5px;top:995px;width:3px;height:3px;border-radius:50%;background:#7d828b"></div>
<div class="a" style="left:1425.5px;top:995px;width:3px;height:3px;border-radius:50%;background:#8d9199"></div>
<div class="a" style="left:1257px;top:984.5px;width:24px;height:24px;border-radius:50%;background:#fff;box-shadow:0 0 0 1px rgba(0,0,0,0.1),0 2px 4px rgba(0,0,0,0.15)"></div>
<div class="a tb" style="left:1463.4px;top:987.64px;font-weight:normal;-webkit-text-stroke:0.45px #0d1216;letter-spacing:0.3px">39%</div>
<div class="a" style="left:1533.5px;top:987px;width:2px;height:20px;background:#d9dadd;border-radius:1px"></div>
<svg class="a" style="left:1553px;top:985px" width="25" height="24" viewBox="0 0 25 24"><g fill="none" stroke="#0d1216" stroke-width="2"><rect x="1.8" y="1.6" width="21.4" height="13.4" rx="1"/><rect x="1.8" y="17.6" width="21.4" height="5.4" rx="0.8"/><path d="M9 17.6 V23 M16 17.6 V23"/></g></svg>
<div class="a tb" style="left:1587.5px;top:987.44px;font-weight:normal;-webkit-text-stroke:0.45px #0d1216;letter-spacing:0.2px">Pages</div>
<div class="a tb" style="left:1667.4px;top:987.44px;font-weight:normal;-webkit-text-stroke:0.45px #0d1216;letter-spacing:0.5px">1/2</div>
<svg class="a" style="left:1726px;top:986px" width="22" height="22" viewBox="0 0 22 22"><g fill="none" stroke="#0d1216" stroke-width="1.9"><rect x="1.6" y="1.6" width="7.6" height="7.6" rx="1.6"/><rect x="12.8" y="1.6" width="7.6" height="7.6" rx="1.6"/><rect x="1.6" y="12.8" width="7.6" height="7.6" rx="1.6"/><rect x="12.8" y="12.8" width="7.6" height="7.6" rx="1.6"/></g></svg>
<svg class="a" style="left:1777px;top:985px" width="23" height="23" viewBox="0 0 23 23"><g fill="none" stroke="#0d1216" stroke-width="1.9" stroke-linecap="round" stroke-linejoin="round"><path d="M13.5 9.5 L21 2 M14.8 2 H21 V8.2"/><path d="M9.5 13.5 L2 21 M2 14.8 V21 H8.2"/></g></svg>
<svg class="a" style="left:1825px;top:983.5px" width="27" height="27" viewBox="0 0 27 27"><circle cx="13.5" cy="13.5" r="11.6" fill="none" stroke="#0d1216" stroke-width="1.9"/><path d="M8.8 13.8 L12 16.8 L18.2 10.4" fill="none" stroke="#0d1216" stroke-width="1.9" stroke-linecap="round" stroke-linejoin="round"/></svg>
<svg class="a" style="left:1876px;top:983.5px" width="27" height="27" viewBox="0 0 27 27"><circle cx="13.5" cy="13.5" r="11.6" fill="none" stroke="#0d1216" stroke-width="1.9"/><path d="M10 10.6 A3.6 3.6 0 1 1 15.3 13.6 C14.2 14.3 13.5 15 13.5 16.4" fill="none" stroke="#0d1216" stroke-width="2" stroke-linecap="round"/><circle cx="13.5" cy="19.8" r="1.3" fill="#0d1216"/></svg>
<div class="a" style="left:1909px;top:80px;width:7px;height:473px;border-radius:4px;background:#b8bcc4"></div>
<div class="a" style="left:532px;top:522px;width:33px;height:53px;border-radius:17px;background:#fff;box-shadow:0 1px 6px rgba(0,0,0,0.08)"></div>
<svg class="a" style="left:543px;top:541px" width="11" height="14" viewBox="0 0 11 14"><path d="M7.5 2 L3 7 L7.5 12" fill="none" stroke="#0d1216" stroke-width="1.9" stroke-linecap="round" stroke-linejoin="round"/></svg>
</body></html>
